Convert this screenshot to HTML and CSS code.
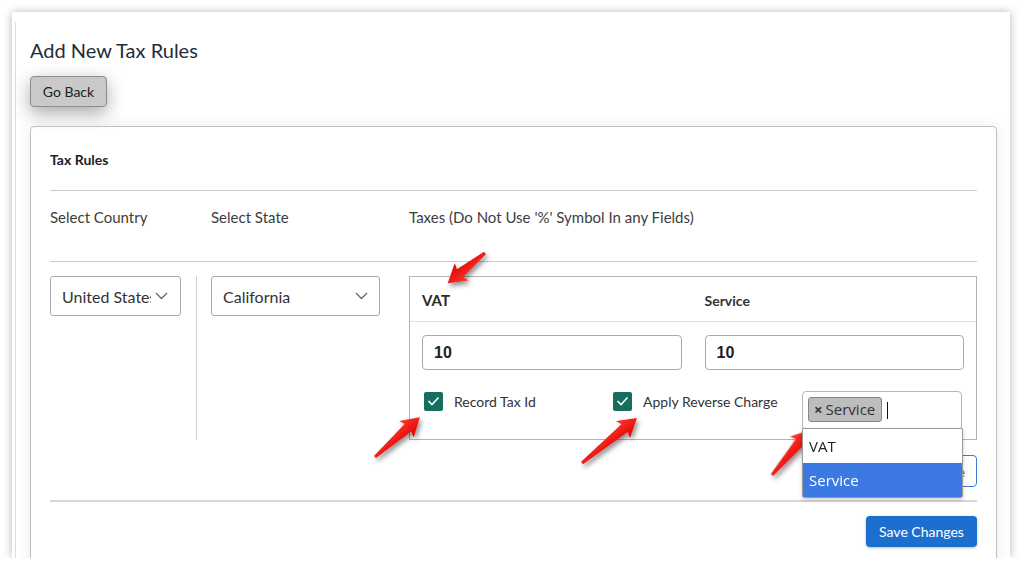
FILE: index.html
```html
<!DOCTYPE html>
<html>
<head>
    <title>Add New Tax Rules</title>
    <link rel="stylesheet" href="styles.css">
</head>
<body>
    <div class="window">
        <div class="page">
            <h1 class="title">Add New Tax Rules</h1>
            <button class="btn-back">Go Back</button>

            <div class="card">
                <div class="card-title">Tax Rules</div>
                <hr class="rule">

                <div class="grid labels">
                    <div class="col-country">Select Country</div>
                    <div class="col-state">Select State</div>
                    <div class="col-taxes">Taxes (Do Not Use '%' Symbol In any Fields)</div>
                </div>
                <hr class="rule rule-low">

                <div class="grid fields">
                    <div class="col-country divided">
                        <div class="select select-country">
                            <span class="select-text">United States</span>
                            <svg class="chevron" width="13" height="8" viewBox="0 0 13 8"><polyline points="1,1 6.5,6.5 12,1" fill="none" stroke="#666" stroke-width="1.3"/></svg>
                        </div>
                    </div>
                    <div class="col-state">
                        <div class="select select-state">
                            <span class="select-text">California</span>
                            <svg class="chevron" width="13" height="8" viewBox="0 0 13 8"><polyline points="1,1 6.5,6.5 12,1" fill="none" stroke="#666" stroke-width="1.3"/></svg>
                        </div>
                    </div>
                    <div class="col-taxes">
                        <div class="taxes">
                            <div class="taxes-head">
                                <div class="th th-vat">VAT</div>
                                <div class="th">Service</div>
                            </div>
                            <div class="taxes-body">
                                <div class="inputs">
                                    <div class="input">10</div>
                                    <div class="input">10</div>
                                </div>
                                <div class="options">
                                    <label class="check">
                                        <span class="box"><svg width="13" height="10" viewBox="0 0 13 10"><polyline points="1.5,5 5,8.5 11.5,1.5" fill="none" stroke="#fff" stroke-width="1.6"/></svg></span>
                                        Record Tax Id
                                    </label>
                                    <label class="check">
                                        <span class="box"><svg width="13" height="10" viewBox="0 0 13 10"><polyline points="1.5,5 5,8.5 11.5,1.5" fill="none" stroke="#fff" stroke-width="1.6"/></svg></span>
                                        Apply Reverse Charge
                                    </label>
                                    <div class="multi">
                                        <span class="tag"><b>×</b>Service</span>
                                        <span class="caret"></span>
                                        <ul class="dropdown">
                                            <li>VAT</li>
                                            <li class="active">Service</li>
                                        </ul>
                                    </div>
                                </div>
                            </div>
                        </div>
                    </div>
                </div>

                <div class="row-actions">
                    <button class="btn-outline">Add More</button>
                </div>
                <hr class="rule rule-thick">
                <div class="row-footer">
                    <button class="btn-primary">Save Changes</button>
                </div>
            </div>
        </div>
    </div>

    <!-- annotation arrows -->
    <svg class="arrows" width="1021" height="570" viewBox="0 0 1021 570">
        <defs>
            <linearGradient id="red" x1="0" y1="0" x2="0" y2="1">
                <stop offset="0" stop-color="#ff3b2f"/>
                <stop offset="1" stop-color="#e00000"/>
            </linearGradient>
            <filter id="shade" x="-50%" y="-50%" width="200%" height="200%">
                <feDropShadow dx="2" dy="3" stdDeviation="2.5" flood-color="#000" flood-opacity="0.45"/>
            </filter>
        </defs>
        <g fill="url(#red)" filter="url(#shade)">
            <polygon transform="translate(485 253) rotate(141)" points="0,-1.5 32,-5 30,-11 48,0 30,11 32,5 0,1.5"/>
            <polygon transform="translate(375 457) rotate(-41.6)" points="0,-1.5 44,-5 42,-11 60,0 42,11 44,5 0,1.5"/>
            <polygon transform="translate(582 463) rotate(-39.3)" points="0,-1.5 55,-5 53,-11 71,0 53,11 55,5 0,1.5"/>
            <polygon transform="translate(772 475) rotate(-49.8)" points="0,-1.5 43,-5 41,-11 59,0 41,11 43,5 0,1.5"/>
        </g>
    </svg>
</body>
</html>
```

FILE: styles.css
```css
body {
    margin: 0;
    background: #fff;
    font-family: 'Lato', 'Open Sans', sans-serif;
    color: #333;
}
.window {
    margin: 12px 0 0 12px;
    padding-top: 10px;
    box-sizing: border-box;
    width: 998px;
    height: 546px;
    overflow: hidden;
    background: #fff;
    box-shadow: 0 0 9px rgba(0, 0, 0, 0.28);
}
.page {
    margin-left: 3px;
    height: 600px;
    border-left: 1px solid #dcdcdc;
    padding-left: 14px;
}
.title {
    margin: 0;
    padding-top: 16px;
    font-size: 20px;
    line-height: 24px;
    font-weight: 400;
    color: #1f2c3a;
}
.btn-back {
    display: block;
    margin-top: 14px;
    width: 77px;
    height: 31px;
    padding: 0;
    font-family: 'Lato', sans-serif;
    font-size: 14px;
    color: #222;
    background: #c9c9c9;
    border: 1px solid #8d8d8d;
    border-radius: 4px;
    box-shadow: 0 6px 18px rgba(0, 0, 0, 0.35);
}
.card {
    margin-top: 19px;
    width: 967px;
    box-sizing: border-box;
    border: 1px solid #b9c1c9;
    border-radius: 4px;
    padding: 23px 19px 20px;
    box-shadow: 0 0 14px rgba(0, 0, 0, 0.08);
    position: relative;
}
.card-title {
    font-size: 14px;
    line-height: 20px;
    font-weight: 700;
    color: #222;
}
.rule {
    margin: 20px 0 0;
    border: none;
    border-top: 1px solid #c9c9c9;
}
.rule-low {
    margin-top: 34px;
}
.rule-thick {
    margin-top: 13px;
    border-top: 2px solid #d6d6d6;
}
.grid {
    display: grid;
    grid-template-columns: 147px 212px 568px;
}
.labels {
    margin-top: 16px;
    font-size: 15px;
    line-height: 20px;
    color: #3d3d3d;
}
.col-state {
    padding-left: 14px;
}
.fields {
    margin-top: 14px;
    height: 164px;
}
.divided {
    border-right: 1px solid #cfcfcf;
}
.select {
    display: flex;
    align-items: center;
    gap: 4px;
    box-sizing: border-box;
    height: 40px;
    border: 1px solid #ababab;
    border-radius: 3px;
    padding: 0 11px;
    font-size: 16px;
    color: #333;
}
.select-country {
    width: 131px;
    padding-right: 12px;
}
.select-state {
    width: 169px;
}
.select-text {
    flex: 1;
    overflow: hidden;
    white-space: nowrap;
}
.chevron {
    flex: none;
}
.taxes {
    box-sizing: border-box;
    height: 164px;
    border: 1px solid #b3b3b3;
}
.taxes-head {
    display: grid;
    grid-template-columns: 1fr 1fr;
    gap: 23px;
    padding: 0 12px;
    height: 44px;
    align-items: center;
    border-bottom: 1px solid #dedede;
}
.th {
    font-size: 14px;
    font-weight: 700;
    color: #333;
    padding-top: 2px;
}
.th-vat {
    font-size: 15px;
    color: #2b2b2b;
}
.taxes-body {
    padding: 13px 12px 0;
}
.inputs {
    display: grid;
    grid-template-columns: 1fr 1fr;
    gap: 23px;
}
.input {
    box-sizing: border-box;
    height: 35px;
    border: 1px solid #aaa;
    border-radius: 4px;
    padding: 0 11px;
    font-family: 'Liberation Sans', Arial, sans-serif;
    font-size: 16px;
    font-weight: 700;
    line-height: 33px;
    color: #222;
}
.options {
    margin-top: 21px;
    padding-left: 2px;
    display: grid;
    grid-template-columns: 189px 189px 160px;
    align-items: start;
}
.check {
    display: flex;
    align-items: center;
    gap: 11px;
    font-size: 14px;
    color: #333;
    height: 20px;
}
.box {
    display: flex;
    align-items: center;
    justify-content: center;
    width: 19px;
    height: 19px;
    border-radius: 2px;
    background: #176e5f;
}
.multi {
    position: relative;
    box-sizing: border-box;
    height: 39px;
    border: 1px solid #b8b8b8;
    border-radius: 4px;
    padding: 5px 5px 0;
    display: flex;
    align-items: flex-start;
    gap: 5px;
}
.tag {
    box-sizing: border-box;
    height: 25px;
    padding: 0 6px 0 5px;
    background: #bdbdbd;
    border: 1px solid #858585;
    border-radius: 3px;
    font-family: 'Open Sans', sans-serif;
    font-size: 15px;
    line-height: 22px;
    color: #333;
}
.tag b {
    font-size: 15px;
    margin-right: 3px;
}
.caret {
    margin-top: 5px;
    width: 1px;
    height: 17px;
    background: #111;
}
.dropdown {
    position: absolute;
    top: 36px;
    left: -1px;
    width: 161px;
    box-sizing: border-box;
    margin: 0;
    padding: 0;
    list-style: none;
    background: #fff;
    border: 1px solid #9a9a9a;
    border-radius: 0 0 3px 3px;
    box-shadow: 0 2px 4px rgba(0, 0, 0, 0.2);
    font-family: 'Open Sans', sans-serif;
    font-size: 15px;
    z-index: 2;
}
.dropdown li {
    height: 34px;
    line-height: 34px;
    padding-left: 6px;
    color: #222;
}
.dropdown li.active {
    background: #3d79e3;
    color: #fff;
}
.row-actions {
    margin-top: 15px;
    display: flex;
    justify-content: flex-end;
}
.btn-outline {
    height: 32px;
    padding: 0 11px;
    font-family: 'Lato', sans-serif;
    font-size: 14px;
    color: #2f5f9e;
    background: #fff;
    border: 1px solid #3a7bd5;
    border-radius: 4px;
}
.row-footer {
    margin-top: 14px;
    display: flex;
    justify-content: flex-end;
}
.btn-primary {
    width: 111px;
    height: 31px;
    padding: 0;
    font-family: 'Lato', sans-serif;
    font-size: 14px;
    color: #fff;
    background: #1c6fcf;
    border: none;
    border-radius: 4px;
    box-shadow: 0 1px 3px rgba(0, 0, 0, 0.25);
}
.arrows {
    position: absolute;
    top: 0;
    left: 0;
    pointer-events: none;
}
```
